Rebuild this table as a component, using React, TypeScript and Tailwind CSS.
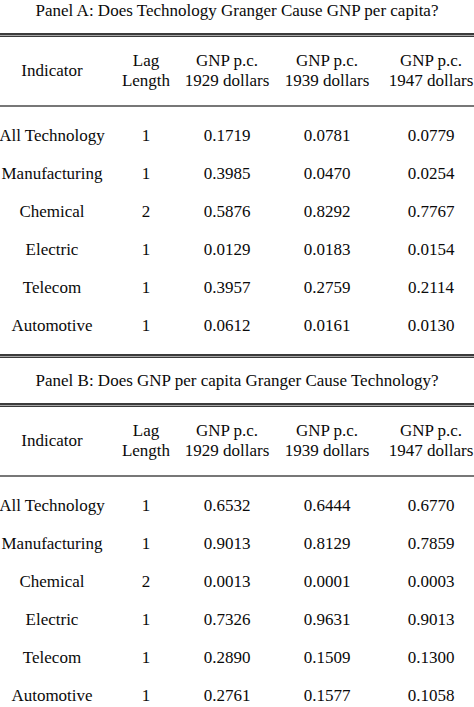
const COLS = "grid grid-cols-[104px_84px_78px_122px_86px] text-center";

type Row = [string, string, string, string, string];

const PANEL_A: Row[] = [
  ["All Technology", "1", "0.1719", "0.0781", "0.0779"],
  ["Manufacturing", "1", "0.3985", "0.0470", "0.0254"],
  ["Chemical", "2", "0.5876", "0.8292", "0.7767"],
  ["Electric", "1", "0.0129", "0.0183", "0.0154"],
  ["Telecom", "1", "0.3957", "0.2759", "0.2114"],
  ["Automotive", "1", "0.0612", "0.0161", "0.0130"],
];

const PANEL_B: Row[] = [
  ["All Technology", "1", "0.6532", "0.6444", "0.6770"],
  ["Manufacturing", "1", "0.9013", "0.8129", "0.7859"],
  ["Chemical", "2", "0.0013", "0.0001", "0.0003"],
  ["Electric", "1", "0.7326", "0.9631", "0.9013"],
  ["Telecom", "1", "0.2890", "0.1509", "0.1300"],
  ["Automotive", "1", "0.2761", "0.1577", "0.1058"],
];

const HEAD: [string, string?][] = [
  ["Indicator"],
  ["Lag", "Length"],
  ["GNP p.c.", "1929 dollars"],
  ["GNP p.c.", "1939 dollars"],
  ["GNP p.c.", "1947 dollars"],
];

function DoubleRule() {
  return (
    <div>
      <div className="h-[2px] bg-[#3c3c3c]" />
      <div className="h-px bg-[#a8a8a8]" />
      <div className="h-px bg-[#3c3c3c]" />
    </div>
  );
}

function Panel({ title, rows }: { title: string; rows: Row[] }) {
  return (
    <section>
      <h2 className="h-[33px] pt-px text-center leading-[20px] whitespace-nowrap">{title}</h2>
      <DoubleRule />
      <div className={`${COLS} h-[68px] items-center leading-[20px]`}>
        {HEAD.map(([a, b]) => (
          <div key={a + b} className="flex justify-center whitespace-nowrap">
            <div>
              {a}
              {b && (
                <>
                  <br />
                  {b}
                </>
              )}
            </div>
          </div>
        ))}
      </div>
      <div className="h-[2px] bg-[#777]" />
      <div className="pt-[10px] pb-[9px]">
        {rows.map((r) => (
          <div key={r[0]} className={`${COLS} h-[38px] items-center leading-[20px]`}>
            {r.map((cell, i) => (
              <div key={i} className="flex justify-center whitespace-nowrap">
                {cell}
              </div>
            ))}
          </div>
        ))}
      </div>
      <DoubleRule />
    </section>
  );
}

export default function App() {
  return (
    <div className="w-[474px] h-[707px] overflow-hidden bg-white text-[17px] text-[#0a0a0a] [font-family:'Liberation_Serif','Times_New_Roman',serif]">
      <div className="flex flex-col gap-[12px]">
        <Panel title="Panel A: Does Technology Granger Cause GNP per capita?" rows={PANEL_A} />
        <Panel title="Panel B: Does GNP per capita Granger Cause Technology?" rows={PANEL_B} />
      </div>
    </div>
  );
}
